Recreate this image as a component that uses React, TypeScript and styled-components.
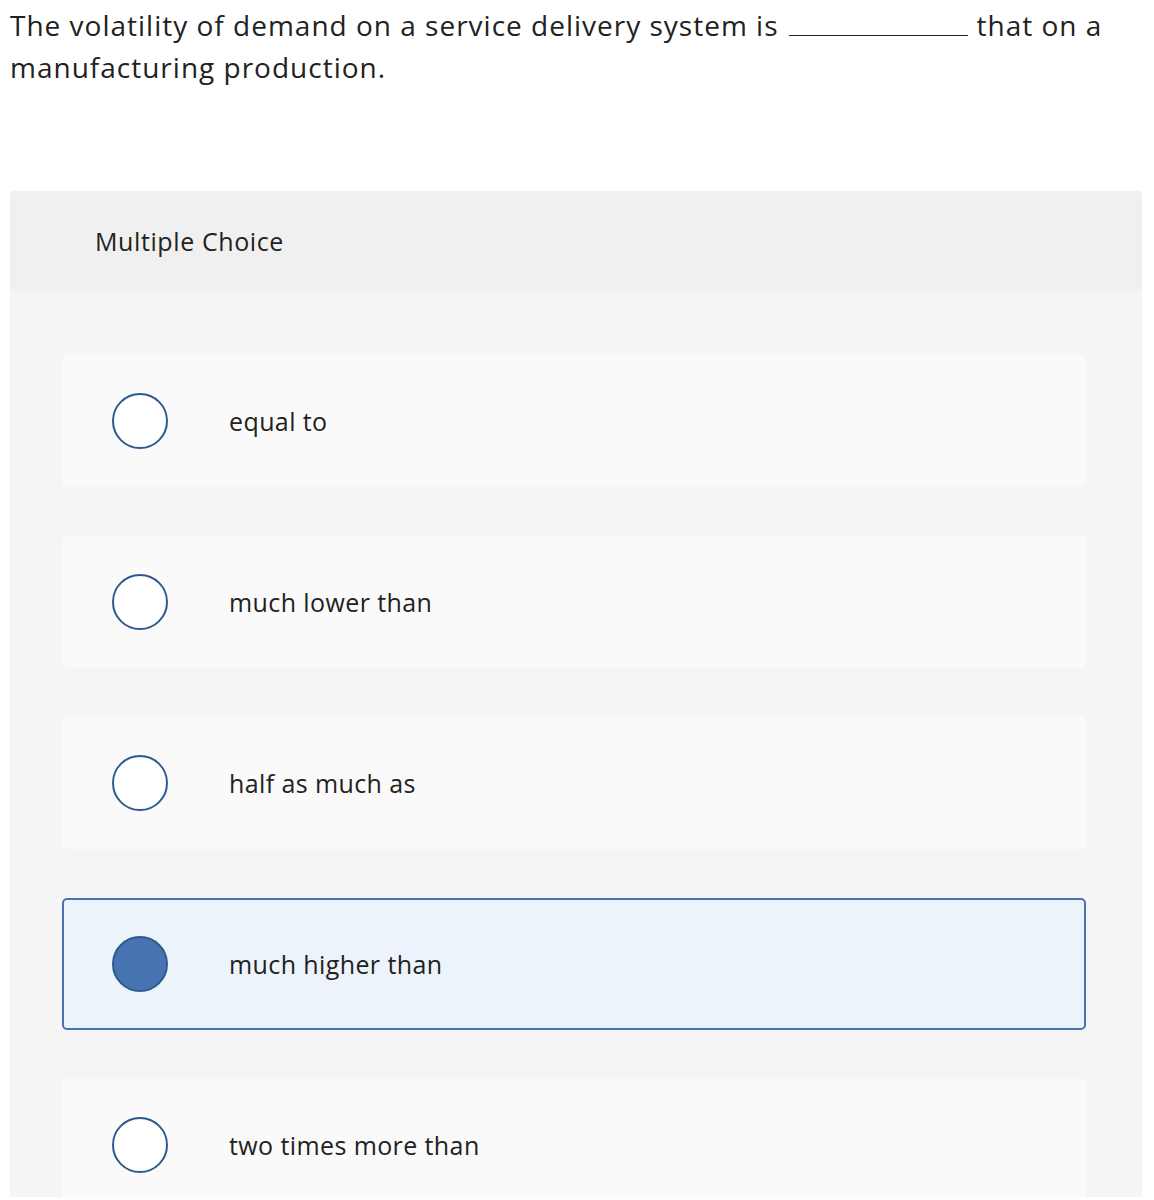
import React from "react";
import styled, { createGlobalStyle } from "styled-components";

const Global = createGlobalStyle`
  html, body { margin: 0; padding: 0; background: #ffffff; }
  body { font-family: "Open Sans", "Lato", sans-serif; color: #222222; }
`;

const Page = styled.div`
  padding: 0 12px 0 10px;
`;

const Question = styled.p`
  margin: 0;
  padding-top: 4px;
  font-size: 28px;
  line-height: 42px;
  letter-spacing: 1px;
  color: #222222;
`;

const Blank = styled.span`
  display: inline-block;
  width: 179px;
  border-bottom: 1.5px solid #222222;
  margin: 0 9px 0 10px;
  vertical-align: baseline;
`;

const Panel = styled.section`
  margin-top: 103px;
  background: #f5f5f5;
  border-radius: 4px 4px 0 0;
  overflow: hidden;
  height: 1006px;
`;

const Header = styled.div`
  height: 100px;
  background: #f0f0f0;
  display: flex;
  align-items: center;
  padding-left: 85px;
  font-size: 25px;
  letter-spacing: 0.6px;
  color: #222222;
`;

const Options = styled.div`
  display: flex;
  flex-direction: column;
  gap: 49px;
  padding: 64px 56px 0 52px;
`;

const Option = styled.label<{ $selected?: boolean }>`
  box-sizing: border-box;
  height: 132px;
  display: flex;
  align-items: center;
  padding-left: ${(p) => (p.$selected ? 48 : 50)}px;
  border-radius: 5px;
  background: ${(p) => (p.$selected ? "#ecf3fb" : "#fafafa")};
  border: ${(p) => (p.$selected ? "2px solid #4a72b0" : "none")};
  cursor: pointer;
`;

const Radio = styled.span<{ $selected?: boolean }>`
  box-sizing: border-box;
  flex: none;
  width: 56px;
  height: 56px;
  border-radius: 50%;
  border: 2px solid #2e5b8f;
  background: ${(p) => (p.$selected ? "#4773b3" : "#ffffff")};
`;

const OptionText = styled.span`
  margin-left: 61px;
  font-size: 25px;
  letter-spacing: 0.4px;
  color: #222222;
`;

const choices = [
  "equal to",
  "much lower than",
  "half as much as",
  "much higher than",
  "two times more than",
];

export default function App() {
  return (
    <Page>
      <Global />
      <Question>
        The volatility of demand on a service delivery system is
        <Blank />
        that on a manufacturing production.
      </Question>
      <Panel>
        <Header>Multiple Choice</Header>
        <Options>
          {choices.map((c) => (
            <Option key={c} $selected={c === "much higher than"}>
              <Radio $selected={c === "much higher than"} />
              <OptionText>{c}</OptionText>
            </Option>
          ))}
        </Options>
      </Panel>
    </Page>
  );
}
